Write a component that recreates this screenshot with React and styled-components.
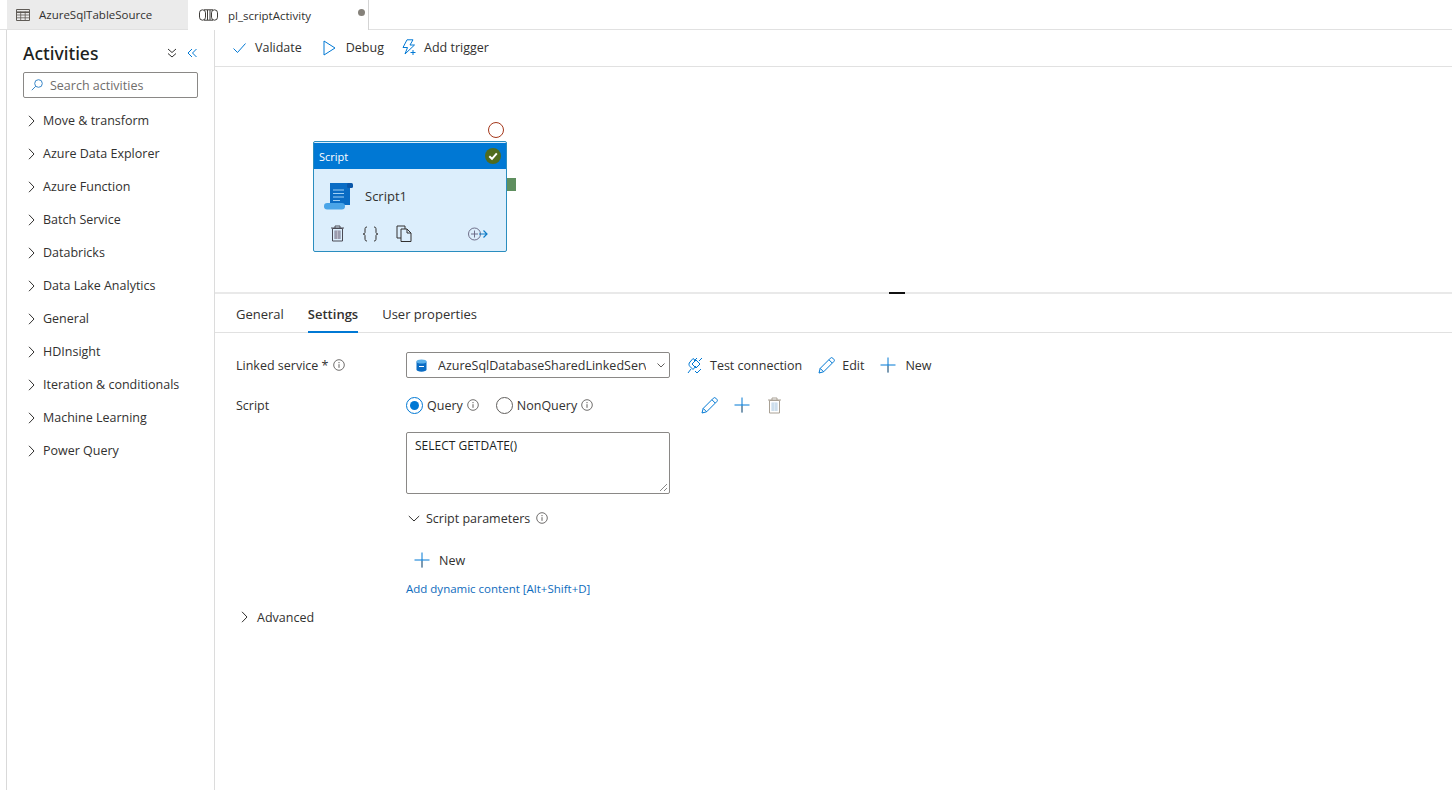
import React from "react";
import styled, { createGlobalStyle } from "styled-components";

const Global = createGlobalStyle`
  html, body { margin: 0; padding: 0; background: #fff; }
  body { font-family: "Open Sans", "Noto Sans", "Liberation Sans", sans-serif; font-size: 12.5px; color: #323130; overflow: hidden; }
  * { box-sizing: border-box; }
`;

const Page = styled.div`width: 1452px; height: 790px; display: flex; flex-direction: column; overflow: hidden;`;
const TabBar = styled.div`height: 30px; display: flex; padding-left: 7px; border-bottom: 1px solid #e1e1e1; flex: none;`;
const FileTab = styled.div`
  width: ${p => p.$w}px; display: flex; align-items: center; padding-left: ${p => p.$pad}px; gap: ${p => p.$gap}px;
  background: ${p => (p.$active ? "#fff" : "#ebebeb")};
  border-right: ${p => (p.$active ? "1px solid #d4d4d4" : "none")};
  height: ${p => (p.$active ? 30 : 29)}px; font-size: 11.5px; position: relative;
`;
const Dirty = styled.span`width: 7px; height: 7px; border-radius: 50%; background: #85817a; margin-left: 37px; margin-top: -5px;`;
const Body = styled.div`flex: 1; display: flex; margin-left: 6px; border-left: 1px solid #d9d9d9; min-height: 0;`;

const Sidebar = styled.aside`width: 208px; flex: none; border-right: 1px solid #dcdcdc; padding: 0 16px; display: flex; flex-direction: column;`;
const SideHead = styled.div`height: 42px; display: flex; align-items: center; justify-content: space-between; padding: 4px 1px 0 0;`;
const SideTitle = styled.h2`margin: 0; font-size: 17.5px; font-weight: 500; color: #201f1e; font-family: "Noto Sans", sans-serif;`;
const HeadIcons = styled.div`display: flex; gap: 10px; align-items: center;`;
const Search = styled.div`width: 175px; height: 26px; border: 1px solid #8a8886; border-radius: 2px; display: flex; align-items: center; padding-left: 7px; gap: 7px; color: #6f6d6b; font-size: 12.5px;`;
const ActivityList = styled.ul`list-style: none; margin: 6px 0 0; padding: 0;`;
const Activity = styled.li`height: 33px; display: flex; align-items: center; gap: 8px; padding-left: 5px; font-size: 12.5px; font-weight: 500; color: #323130;`;

const Content = styled.main`flex: 1; display: flex; flex-direction: column; min-width: 0;`;
const Toolbar = styled.div`height: 37px; flex: none; border-bottom: 1px solid #e1e1e1; display: flex; align-items: center; padding: 0 0 1px 18px;`;
const ToolButton = styled.div`display: flex; align-items: center; gap: ${p => p.$gap || 9}px; margin-right: ${p => p.$mr || 0}px; font-size: 12.5px; color: #323130;`;

const Canvas = styled.div`height: 225px; flex: none; position: relative;`;
const Node = styled.div`position: absolute; left: 98px; top: 74px; width: 194px; height: 111px; border: 1px solid #2a8dbf; border-radius: 2px; background: #dceefc; display: flex; flex-direction: column;`;
const NodeHead = styled.div`height: 26px; margin-top: 1px; background: #0078d4; color: #fff; display: flex; align-items: center; justify-content: space-between; padding: 0 5px 0 5px; font-size: 11px; font-weight: 500;`;
const NodeBody = styled.div`flex: 1; display: flex; align-items: center; gap: 12px; padding-left: 10px; font-size: 13px; color: #323130; padding-top: 2px;`;
const NodeFoot = styled.div`height: 30px; display: flex; align-items: center; padding: 0 18px 5px 16px;`;
const FootGroup = styled.div`display: flex; align-items: center; gap: 17px; flex: 1;`;
const Redo = styled.span`position: absolute; left: 273px; top: 55px; width: 16px; height: 16px; border-radius: 50%; border: 1px solid #a4371a; background: #fff;`;
const Port = styled.span`position: absolute; left: 292px; top: 111px; width: 9px; height: 13px; background: #5f8f5f;`;

const Splitter = styled.div`height: 2px; flex: none; background: #e9e9e9; position: relative;`;
const Grip = styled.span`position: absolute; left: 674px; top: 0; width: 16px; height: 2px; background: #111;`;

const DetailTabs = styled.div`height: 39px; flex: none; border-bottom: 1px solid #e1e1e1; display: flex; gap: 24px; padding: 0 0 0 21px;`;
const DetailTab = styled.div`
  height: 39px; display: flex; align-items: center; padding-top: 3px; font-size: 13px;
  font-weight: ${p => (p.$active ? 600 : 400)};
  border-bottom: 2px solid ${p => (p.$active ? "#0078d4" : "transparent")};
  color: #323130;
`;

const Form = styled.div`padding: 19px 0 0 21px; display: flex; flex-direction: column;`;
const Row = styled.div`display: flex; align-items: center; height: ${p => p.$h}px; margin-bottom: ${p => p.$mb || 0}px;`;
const Label = styled.div`width: 170px; flex: none; display: flex; align-items: center; gap: 5px; font-weight: 500; font-size: 12.5px;`;
const Select = styled.div`width: 264px; height: 26px; border: 1px solid #8a8886; border-radius: 2px; display: flex; align-items: center; padding: 0 4px 0 9px; gap: 11px; flex: none; font-size: 12.5px;`;
const SelectText = styled.span`flex: 1; white-space: nowrap; overflow: hidden;`;
const Actions = styled.div`display: flex; align-items: center; margin-left: 17px;`;
const Radio = styled.span`
  width: 17px; height: 17px; border-radius: 50%; flex: none; background: #fff;
  border: ${p => (p.$on ? "1.5px solid #0078d4" : "1px solid #605e5c")};
  display: flex; align-items: center; justify-content: center;
  &::after { content: ""; width: 9px; height: 9px; border-radius: 50%; background: ${p => (p.$on ? "#0078d4" : "transparent")}; }
`;
const Choice = styled.div`display: flex; align-items: center; gap: 4px; margin-right: ${p => p.$mr}px; font-size: 12.5px;`;
const Indent = styled.div`margin-left: 170px;`;
const ScriptBox = styled.div`width: 264px; height: 62px; border: 1px solid #8a8886; border-radius: 2px; padding: 4px 8px; font-size: 12px; color: #201f1e; position: relative;`;
const Resize = styled.svg`position: absolute; right: 1px; bottom: 1px;`;
const Section = styled.div`display: flex; align-items: center; gap: 6px; font-weight: 500; height: 20px; font-size: 12.5px;`;
const NewRow = styled.div`display: flex; align-items: center; gap: 9px; height: 24px; margin: 20px 0 0 8px;`;
const LinkText = styled.div`color: #0f6cbd; font-size: 11.5px; margin-top: 9px; height: 16px; line-height: 16px;`;
const Advanced = styled.div`display: flex; align-items: center; gap: 9px; font-weight: 500; height: 20px; margin: 10px 0 0 5px; font-size: 12.5px;`;

const Sv = ({ w, h = w, vb, children, ...r }) => (
  <svg width={w} height={h} viewBox={vb || `0 0 ${w} ${h}`} fill="none" {...r} style={{ flex: "none" }}>{children}</svg>
);

const ChevR = ({ c = "#323130" }) => <Sv w={7} h={12}><path d="M1 .8 6 6l-5 5.2" stroke={c} strokeWidth="1" /></Sv>;
const ChevD = () => <Sv w={12} h={7}><path d="M.8 1 6 6l5.2-5" stroke="#323130" strokeWidth="1" /></Sv>;
const Info = () => (
  <Sv w={12} h={12} style={{ marginTop: -3 }}>
    <circle cx="6" cy="6" r="5.3" stroke="#605e5c" strokeWidth=".9" />
    <path d="M6 5.2v3.6" stroke="#605e5c" strokeWidth="1" /><path d="M6 3v1.2" stroke="#605e5c" strokeWidth="1" />
  </Sv>
);
const Plus = () => <Sv w={16} h={16}><path d="M8 .5v15M.5 8h15" stroke="#0078d4" strokeWidth="1" /><path d="M8 9v6.5" stroke="#7a7a7a" strokeWidth="1" /></Sv>;
const Pencil = () => (
  <Sv w={17} h={17}>
    <path d="M1 16l1.2-4.6L12.4 1.2a1.7 1.7 0 0 1 2.4 0l1 1a1.7 1.7 0 0 1 0 2.4L5.6 14.8 1 16Z" stroke="#0078d4" strokeWidth="1" />
    <path d="M2.2 11.4l3.4 3.4M11 2.8l3.2 3.2" stroke="#0078d4" strokeWidth="1" />
  </Sv>
);
const Trash = ({ c = "#69797e", f = "#8b8ba7", w = 15 }) => (
  <Sv w={w} h={17} vb="0 0 15 17">
    <path d="M1 3h13M5 3V1h5v2" stroke={c} strokeWidth="1" />
    <path d="M2.5 3.5h10V16h-10z" stroke={c} strokeWidth="1" />
    <path d="M4.5 5.5h6V14h-6z" fill={f} />
    <path d="M6 5.5V14M7.5 5.5V14M9 5.5V14" stroke="#fff" strokeWidth=".5" />
  </Sv>
);

const activities = ["Move & transform", "Azure Data Explorer", "Azure Function", "Batch Service", "Databricks", "Data Lake Analytics", "General", "HDInsight", "Iteration & conditionals", "Machine Learning", "Power Query"];

export default function App() {
  return (
    <Page>
      <Global />
      <TabBar>
        <FileTab $w={181} $pad={9} $gap={9}>
          <Sv w={14} h={12}>
            <path d="M.5.5h13v11H.5z" stroke="#5f5b56" /><path d="M.5 3.2h13" stroke="#5f5b56" strokeWidth="1.6" />
            <path d="M.5 6h13M.5 8.8h13M4.7 2.5v9M9.2 2.5v9" stroke="#5f5b56" strokeWidth=".8" />
          </Sv>
          AzureSqlTableSource
        </FileTab>
        <FileTab $active $w={181} $pad={11} $gap={10}>
          <Sv w={19} h={12}>
            <rect x=".5" y=".8" width="6" height="10.4" rx="3" stroke="#3f3d3a" />
            <rect x="12.5" y=".8" width="6" height="10.4" rx="3" stroke="#3f3d3a" />
            <path d="M5 .8h9M5 11.2h9M8.5 1v10M11 1v10" stroke="#3f3d3a" />
          </Sv>
          pl_scriptActivity
          <Dirty />
        </FileTab>
      </TabBar>
      <Body>
        <Sidebar>
          <SideHead>
            <SideTitle>Activities</SideTitle>
            <HeadIcons>
              <Sv w={10} h={10}><path d="M1 1l4 3.5L9 1M1 5.5 5 9l4-3.5" stroke="#323130" strokeWidth="1" /></Sv>
              <Sv w={10} h={10}><path d="M5 1 1 5l4 4M9.500 1l-4 4 4 4" stroke="#0078d4" strokeWidth="1" /></Sv>
            </HeadIcons>
          </SideHead>
          <Search>
            <Sv w={12} h={12}><circle cx="7.500" cy="4.500" r="3.800" stroke="#3a87c8" /><path d="M4.800 7.200.8 11.200" stroke="#3a87c8" /></Sv>
            Search activities
          </Search>
          <ActivityList>
            {activities.map(a => (
              <Activity key={a}><ChevR />{a}</Activity>
            ))}
          </ActivityList>
        </Sidebar>
        <Content>
          <Toolbar>
            <ToolButton $mr={21}>
              <Sv w={13} h={10}><path d="M.5 5.500 4.500 9.500 12.500.5" stroke="#0078d4" /></Sv>
              Validate
            </ToolButton>
            <ToolButton $mr={18} $gap={10}>
              <Sv w={13} h={16}><path d="M1 1v14l11-7z" stroke="#0078d4" /></Sv>
              Debug
            </ToolButton>
            <ToolButton $gap={8}>
              <Sv w={14} h={17}>
                <path d="M5 .8h6L8 6h4.500L3 15l2.500-6.500H1z" stroke="#0078d4" />
                <path d="M11 11v5M8.500 13.500h5" stroke="#0078d4" />
              </Sv>
              Add trigger
            </ToolButton>
          </Toolbar>
          <Canvas>
            <Redo />
            <Node>
              <NodeHead>
                Script
                <Sv w={16} h={16}>
                  <circle cx="8" cy="8" r="8" fill="#4f6b1e" />
                  <path d="M4.300 8.200 7 10.800l4.800-5.400" stroke="#fff" strokeWidth="2" />
                </Sv>
              </NodeHead>
              <NodeBody>
                <Sv w={29} h={28}>
                  <path d="M6 1h20v22H6z" fill="#0a6cc4" />
                  <rect x="23" y="1" width="6" height="5" rx="1.500" fill="#0a56a8" />
                  <path d="M9 8h11M9 11.500h11M9 15h11M9 18.500h7" stroke="#9fd0f5" strokeWidth="1" />
                  <rect x="0" y="21" width="21" height="6.500" rx="3.200" fill="#4aa5e8" />
                </Sv>
                Script1
              </NodeBody>
              <NodeFoot>
                <FootGroup>
                  <Trash c="#4a4a55" f="#7b7b93" />
                  <Sv w={17} h={16}><path d="M5 1c-2 0-2 1-2 3v2.500C3 7.500 2 8 1 8c1 0 2 .5 2 1.500V12c0 2 0 3 2 3M12 1c2 0 2 1 2 3v2.500c0 1 1 1.500 2 1.500-1 0-2 .5-2 1.500V12c0 2 0 3-2 3" stroke="#323130" /></Sv>
                  <Sv w={16} h={17}><path d="M1 1h8v3M1 1v12h4" stroke="#323130" /><path d="M5 4h6l4 4v8.500H5z" stroke="#323130" fill="#dceefc" /><path d="M11 4v4h4" stroke="#323130" /></Sv>
                </FootGroup>
                <Sv w={21} h={14}>
                  <circle cx="7.500" cy="7" r="6" stroke="#6f6f8a" />
                  <path d="M7.500 3.500v7M4 7h7" stroke="#6f6f8a" />
                  <path d="M12 7h8M16.500 3.500 20 7l-3.500 3.500" stroke="#0f7cc8" strokeWidth="1.200" />
                </Sv>
              </NodeFoot>
            </Node>
            <Port />
          </Canvas>
          <Splitter><Grip /></Splitter>
          <DetailTabs>
            <DetailTab>General</DetailTab>
            <DetailTab $active>Settings</DetailTab>
            <DetailTab>User properties</DetailTab>
          </DetailTabs>
          <Form>
            <Row $h={26} $mb={14}>
              <Label>Linked service * <Info /></Label>
              <Select>
                <Sv w={11} h={13}>
                  <path d="M.5 2.500v8c0 1.300 2.200 2.200 5 2.200s5-.9 5-2.200v-8z" fill="#0a6cc4" />
                  <ellipse cx="5.500" cy="2.500" rx="5" ry="2" fill="#5bb0ea" />
                  <path d="M3 7.500h5" stroke="#fff" strokeWidth="1" />
                </Sv>
                <SelectText>AzureSqlDatabaseSharedLinkedServi...</SelectText>
                <Sv w={8} h={5}><path d="M.5.5 4 4 7.500.5" stroke="#605e5c" /></Sv>
              </Select>
              <Actions>
                <ToolButton $mr={16} $gap={7}>
                  <Sv w={16} h={17}>
                    <path d="M9 4 6 1.500 3 5a3 3 0 0 0 0 4.500l3 3 3-3.500" transform="rotate(0)" stroke="#0078d4" />
                    <path d="M1 16l3-4M15 1l-3 3M7 4l3-3M5 7 9 3l4 4-4 4z" stroke="#0078d4" />
                    <path d="M8 14l2 2 4-4" stroke="#0078d4" />
                  </Sv>
                  Test connection
                </ToolButton>
                <ToolButton $mr={16} $gap={7}>
                  <Pencil />
                  Edit
                </ToolButton>
                <ToolButton $gap={9}>
                  <Plus />
                  New
                </ToolButton>
              </Actions>
            </Row>
            <Row $h={26} $mb={14}>
              <Label>Script</Label>
              <Choice $mr={17}><Radio $on />Query <Info /></Choice>
              <Choice $mr={108}><Radio />NonQuery <Info /></Choice>
              <Pencil />
              <span style={{ width: 16 }} />
              <Plus />
              <span style={{ width: 17 }} />
              <Trash c="#a9a195" f="#bdd3e6" />
            </Row>
            <Indent>
              <ScriptBox>
                SELECT GETDATE()
                <Resize width="10" height="10"><path d="M9 2 2 9M9 6 6 9" stroke="#6a6a6a" strokeWidth=".8" /></Resize>
              </ScriptBox>
              <Section style={{ marginTop: 14, paddingLeft: 2 }}>
                <ChevD />
                Script parameters
                <Info />
              </Section>
              <NewRow><Plus />New</NewRow>
              <LinkText>Add dynamic content [Alt+Shift+D]</LinkText>
            </Indent>
            <Advanced><ChevR />Advanced</Advanced>
          </Form>
        </Content>
      </Body>
    </Page>
  );
}
